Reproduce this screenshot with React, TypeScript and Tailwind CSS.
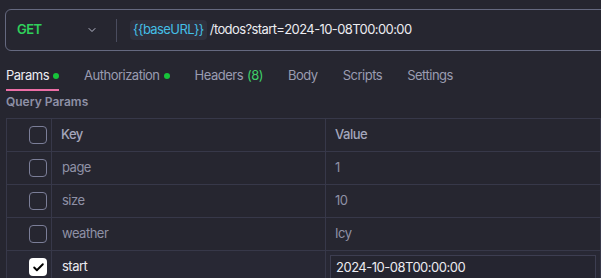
import { ChevronDown, Check } from 'lucide-react';

const rows = [
  { key: 'page', value: '1', checked: false },
  { key: 'size', value: '10', checked: false },
  { key: 'weather', value: 'Icy', checked: false },
  { key: 'start', value: '2024-10-08T00:00:00', checked: true },
];

function Box({ checked }: { checked?: boolean }) {
  if (checked) {
    return (
      <div className="w-[18px] h-[18px] rounded-[4px] bg-white flex items-center justify-center">
        <Check className="w-[13px] h-[13px] text-black" strokeWidth={3.5} />
      </div>
    );
  }
  return <div className="w-[18px] h-[18px] rounded-[4px] border border-[#7b7e98]" />;
}

export default function App() {
  return (
    <main
      className="w-[601px] h-[278px] overflow-hidden bg-[#262630] text-[13px] tracking-[-0.5px]"
      style={{ fontFamily: 'Inter, "Liberation Sans", sans-serif' }}
    >
      <div className="pt-[9px] pl-[5px]">
        <div className="h-[42px] mr-[-10px] flex items-center border border-[#656980] rounded-l-[6px] tracking-[-0.6px]">
          <div className="w-[110px] flex items-center justify-between pl-[11px] pr-[18px]">
            <span className="text-[#2fd05b] font-semibold">GET</span>
            <ChevronDown className="w-[12px] h-[12px] text-[#b8bacb]" strokeWidth={2} />
          </div>
          <div className="w-px h-[23px] bg-[#4a4c5e]" />
          <div className="flex items-center pl-[13px]">
            <span className="px-[3px] h-[20px] flex items-center rounded-[4px] bg-[#2f303d] text-[#44bfe6]">
              {'{{baseURL}}'}
            </span>
            <span className="ml-[3px] text-[#ececf1]">/todos?start=2024-10-08T00:00:00</span>
          </div>
        </div>
      </div>

      <div className="mt-[11px] px-[6px] flex gap-[25px] text-[#9a9cb1]">
        <div className="flex flex-col">
          <div className="flex items-center gap-[4px] h-[27px] text-[#ededf2]">
            Params <span className="w-[6px] h-[6px] rounded-full bg-[#17c43a]" />
          </div>
          <div className="h-[2px] bg-[#ec6ea6]" />
        </div>
        <div className="flex items-center gap-[4px] h-[27px]">
          Authorization <span className="w-[6px] h-[6px] rounded-full bg-[#17c43a]" />
        </div>
        <div className="flex items-center h-[27px]">
          Headers <span className="ml-[4px] text-[#3fcf68]">(8)</span>
        </div>
        <div className="flex items-center h-[27px]">Body</div>
        <div className="flex items-center h-[27px]">Scripts</div>
        <div className="flex items-center h-[27px]">Settings</div>
      </div>

      <div className="px-[6px] h-[27px] pt-[2px] text-[12px] tracking-normal font-semibold text-[#8e90a6]">
        Query Params
      </div>

      <div className="ml-[6px] w-[595px] border-l border-r border-t border-[#373849]">
        <div className="flex h-[33px] border-b border-[#373849]">
          <div className="w-[45px] flex items-center justify-end pr-[4px] border-r border-[#373849]">
            <Box />
          </div>
          <div className="w-[274px] flex items-center pl-[9px] border-r border-[#373849] text-[#a4a6bc] font-medium">
            Key
          </div>
          <div className="flex-1 flex items-center pl-[9px] text-[#a4a6bc] font-medium">Value</div>
        </div>
        {rows.map((r) => (
          <div
            key={r.key}
            className={`flex h-[33px] border-b border-[#373849] ${r.checked ? 'bg-[#282834]' : ''}`}
          >
            <div className="w-[45px] flex items-center justify-end pr-[4px] border-r border-[#373849]">
              <Box checked={r.checked} />
            </div>
            <div
              className={`w-[274px] flex items-center pl-[10px] border-r border-[#373849] ${
                r.checked ? 'text-[#ececf1]' : 'text-[#8f91a6]'
              }`}
            >
              {r.key}
            </div>
            <div className="flex-1 flex items-center px-[4px]">
              {r.checked ? (
                <div className="w-full h-[26px] mt-[4px] self-start border border-[#3d3e51] bg-[#252530] flex items-center pl-[5px] text-[#ececf1]">
                  {r.value}
                </div>
              ) : (
                <span className="pl-[5px] text-[#8f91a6]">{r.value}</span>
              )}
            </div>
          </div>
        ))}
      </div>
    </main>
  );
}
